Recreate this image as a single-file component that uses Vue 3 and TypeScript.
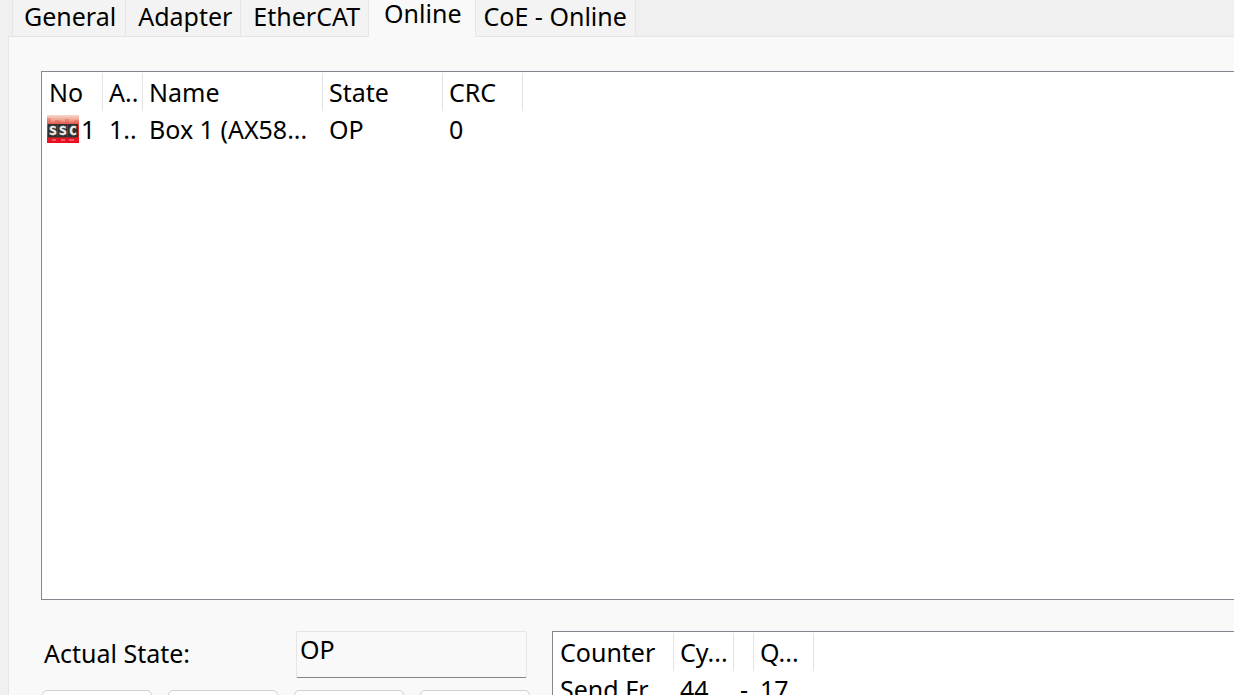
<script setup lang="ts">
import { ref } from 'vue'

interface Column { label: string; width: number }

const tabs = ['General', 'Adapter', 'EtherCAT', 'Online', 'CoE - Online']
const activeTab = ref('Online')

const deviceColumns: Column[] = [
  { label: 'No', width: 61 },
  { label: 'A..', width: 40 },
  { label: 'Name', width: 180 },
  { label: 'State', width: 120 },
  { label: 'CRC', width: 80 },
]
const devices = [{ no: '1', cells: ['1...', 'Box 1 (AX58...', 'OP', '0'] }]

const counterColumns: Column[] = [
  { label: 'Counter', width: 121 },
  { label: 'Cy...', width: 60 },
  { label: '', width: 20 },
  { label: 'Q...', width: 60 },
]
const counters = [['Send Fr..', '44', '-', '17']]

const actualState = ref('OP')
const stateButtons = ['Init', 'Pre-Op', 'Safe-Op', 'Op']
</script>

<template>
  <main class="page">
    <nav class="tabs" role="tablist">
      <button
        v-for="tab in tabs"
        :key="tab"
        class="tab"
        :class="{ active: tab === activeTab }"
        role="tab"
        :aria-selected="tab === activeTab"
        @click="activeTab = tab"
      >{{ tab }}</button>
    </nav>
    <section class="panel">
      <div class="list devices">
        <table>
          <colgroup>
            <col v-for="c in deviceColumns" :key="c.label" :style="{ width: c.width + 'px' }" />
            <col />
          </colgroup>
          <thead>
            <tr>
              <th v-for="c in deviceColumns" :key="c.label">{{ c.label }}</th>
              <td></td>
            </tr>
          </thead>
          <tbody>
            <tr v-for="d in devices" :key="d.no">
              <td class="first">
                <span class="device">
                  <svg width="32" height="28" viewBox="0 0 32 28" aria-hidden="true">
                    <defs>
                      <linearGradient id="chip" x1="0" y1="0" x2="0" y2="1">
                        <stop offset="0" stop-color="#f6d8cc" />
                        <stop offset="0.2" stop-color="#ee9a88" />
                        <stop offset="0.36" stop-color="#dc3c34" />
                        <stop offset="0.75" stop-color="#d9222a" />
                        <stop offset="1" stop-color="#ee0a1c" />
                      </linearGradient>
                    </defs>
                    <rect width="32" height="28" fill="url(#chip)" />
                    <path d="M0 3h4v4H0zM8 5h5v3H8zM18 4h4v4h-4zM27 5h5v3h-5z" fill="#e4574b" opacity=".4" />
                    <path d="M5 24h4v2H5zM14 24h4v2h-4zM22 24h5v2h-5z" fill="#f0566a" />
                    <path d="M1 9h30v14H1z" fill="#8c2a2a" />
                    <path d="M1 9h9v13H1zM11 9h9v13h-9zM21 9h10v13H21z" fill="#303030" />
                    <g class="chip-text">
                      <text x="6" y="20">S</text>
                      <text x="16" y="20">S</text>
                      <text x="26" y="20">C</text>
                    </g>
                  </svg>
                  <span>{{ d.no }}</span>
                </span>
              </td>
              <td v-for="(cell, i) in d.cells" :key="i">{{ cell }}</td>
              <td></td>
            </tr>
          </tbody>
        </table>
      </div>
      <div class="bottom">
        <div class="controls">
          <div class="field">
            <label for="actual-state">Actual State:</label>
            <input id="actual-state" v-model="actualState" type="text" readonly />
          </div>
          <div class="buttons">
            <button v-for="b in stateButtons" :key="b" :aria-label="b"></button>
          </div>
        </div>
        <div class="list counters">
          <table>
            <colgroup>
              <col v-for="c in counterColumns" :key="c.label" :style="{ width: c.width + 'px' }" />
              <col />
            </colgroup>
            <thead>
              <tr>
                <th v-for="c in counterColumns" :key="c.label">{{ c.label }}</th>
                <td></td>
              </tr>
            </thead>
            <tbody>
              <tr v-for="row in counters" :key="row[0]">
                <td v-for="(cell, i) in row" :key="i">{{ cell }}</td>
                <td></td>
              </tr>
            </tbody>
          </table>
        </div>
      </div>
    </section>
  </main>
</template>

<style>
body {
  background: #f0f0f0;
}
</style>

<style scoped>
.page {
  display: flex;
  flex-direction: column;
  height: 100vh;
  overflow: hidden;
  color: #000;
  font: 25px/36px "Noto Sans", "Open Sans", sans-serif;
}
.page * {
  box-sizing: border-box;
}
button,
input {
  font: inherit;
  color: inherit;
  margin: 0;
}
.tabs {
  display: flex;
  flex: none;
  height: 37px;
  margin-left: 12px;
  margin-bottom: -1px;
  position: relative;
}
.tab {
  border: solid #e5e5e5;
  border-width: 0 1px 1px 0;
  background: #f3f3f3;
  padding: 0 8px 4px 12px;
  line-height: 32px;
  white-space: nowrap;
}
.tab:first-child {
  border-left-width: 1px;
  padding-left: 11px;
  padding-right: 9px;
}
.tab:last-child {
  padding-left: 8px;
}
.tab.active {
  background: #f9f9f9;
  border-bottom-color: #f9f9f9;
  padding: 0 13px 10px 15px;
  line-height: 26px;
}
.panel {
  flex: 1;
  min-height: 0;
  display: flex;
  flex-direction: column;
  gap: 31px;
  margin-left: 8px;
  padding: 34px 0 0 32px;
  border: solid #e5e5e5;
  border-width: 1px 0 0 1px;
  background: #f9f9f9;
}
.list {
  background: #fff;
  border: 1px solid #828790;
  border-right: 0;
  overflow: hidden;
}
.devices {
  flex: 1;
  padding-top: 1px;
}
.bottom {
  flex: none;
  display: flex;
  height: 64px;
  overflow: hidden;
}
table {
  width: 100%;
  table-layout: fixed;
  border-collapse: separate;
  border-spacing: 0;
}
th,
td {
  height: 38px;
  padding: 0 0 0 6px;
  text-align: left;
  font-weight: 400;
  white-space: nowrap;
  overflow: hidden;
}
th:first-child,
td:first-child {
  padding-left: 7px;
}
th {
  border-right: 1px solid #e5e5e5;
}
tbody td {
  height: 36px;
  border-right: 5px solid transparent;
}
td.first {
  padding-left: 5px;
}
.device {
  display: flex;
  align-items: center;
  gap: 2px;
}
.device svg {
  flex: none;
}
.chip-text {
  fill: #ececec;
  stroke: #ececec;
  stroke-width: 0.4px;
  font: bold 13px "DejaVu Sans Mono", monospace;
  text-anchor: middle;
}
.controls {
  flex: none;
  width: 511px;
  padding-left: 1px;
}
.field {
  display: flex;
  height: 47px;
}
.field label {
  width: 254px;
  padding: 4px 0 0 2px;
}
.field input {
  width: 231px;
  height: 47px;
  padding: 0 3px 11px;
  border: 1px solid #e5e5e5;
  border-bottom-color: #868686;
  border-radius: 2px;
  background: #f9f9f9;
  outline: 0;
  line-height: 34px;
}
.buttons {
  display: flex;
  gap: 16px;
  margin-top: 12px;
}
.buttons button {
  width: 110px;
  height: 46px;
  border: 1px solid #d0d0d0;
  border-radius: 5px;
  background: #fdfdfd;
}
.counters {
  flex: 1;
  height: 300px;
  padding-top: 1px;
}
</style>
